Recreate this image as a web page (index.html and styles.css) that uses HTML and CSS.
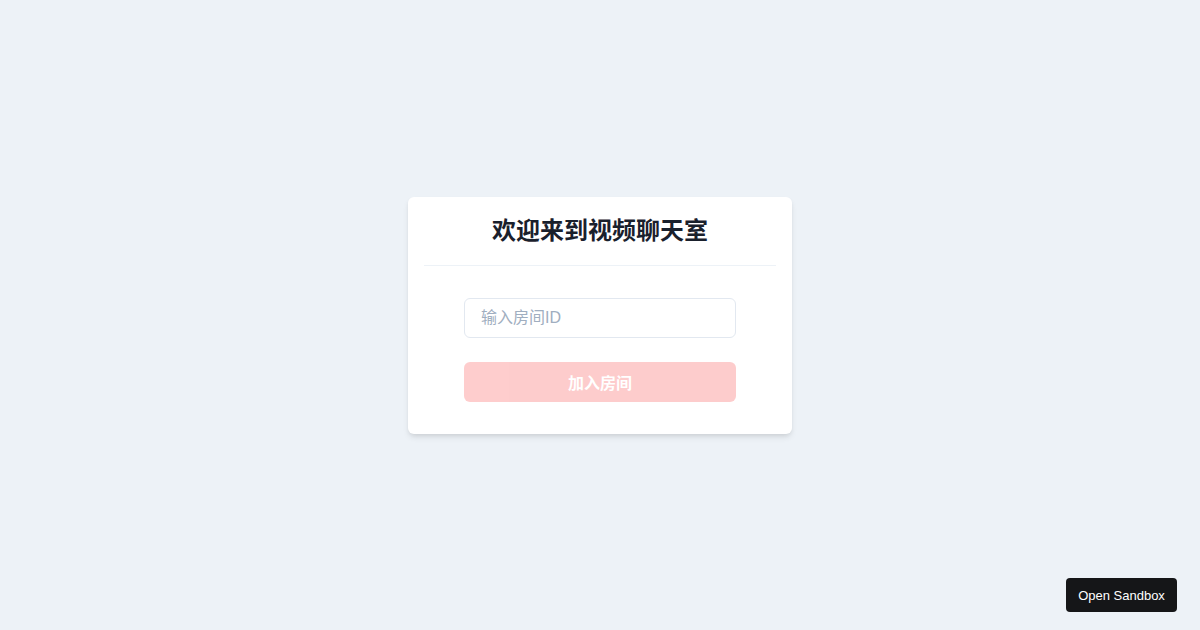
FILE: index.html
```html
<!DOCTYPE html>
<html lang="zh">
<head>
<meta charset="utf-8">
<title>欢迎来到视频聊天室</title>
<link rel="stylesheet" href="styles.css">
</head>
<body>
<main class="page">
  <section class="card">
    <header class="card-header">
      <h1 class="title">欢迎来到视频聊天室</h1>
    </header>
    <form class="card-body">
      <input class="field" type="text" placeholder="输入房间ID">
      <button class="submit" type="button" disabled>加入房间</button>
    </form>
  </section>
</main>
<a class="sandbox" href="#">Open Sandbox</a>
</body>
</html>
```
FILE: styles.css
```css
* { box-sizing: border-box; }
html, body { margin: 0; height: 100%; }
body {
  background: #edf2f7;
  font-family: "Liberation Sans", "Noto Sans CJK SC", sans-serif;
  color: #1a202c;
}
.page {
  height: 100%;
  display: flex;
  align-items: center;
  justify-content: center;
}
.card {
  width: 384px;
  background: #fff;
  border-radius: 6px;
  box-shadow: 0 4px 6px -1px rgba(0,0,0,0.1), 0 2px 4px -1px rgba(0,0,0,0.06);
}
.card-header {
  margin: 0 16px;
  padding: 16px 0;
  border-bottom: 1px solid #edf2f7;
  text-align: center;
}
.title {
  margin: 0;
  font-size: 24px;
  line-height: 36px;
  font-weight: 700;
  color: #1a202c;
}
.card-body {
  padding: 32px 56px;
  display: flex;
  flex-direction: column;
  gap: 24px;
  margin: 0;
}
.field {
  height: 40px;
  width: 100%;
  border: 1px solid #e2e8f0;
  border-radius: 6px;
  padding: 0 16px;
  font-family: inherit;
  font-size: 16px;
  color: #1a202c;
  background: #fff;
  outline: none;
}
.field::placeholder { color: #a0aec0; }
.submit {
  height: 40px;
  width: 100%;
  border: none;
  border-radius: 6px;
  background: #fc8181;
  opacity: 0.4;
  color: #fff;
  font-family: inherit;
  font-size: 16px;
  font-weight: 600;
  cursor: not-allowed;
}
.sandbox {
  position: fixed;
  right: 23px;
  bottom: 18px;
  width: 111px;
  height: 34px;
  display: flex;
  align-items: center;
  justify-content: center;
  background: #151618;
  color: #fff;
  border-radius: 4px;
  font-size: 13px;
  text-decoration: none;
}
```
